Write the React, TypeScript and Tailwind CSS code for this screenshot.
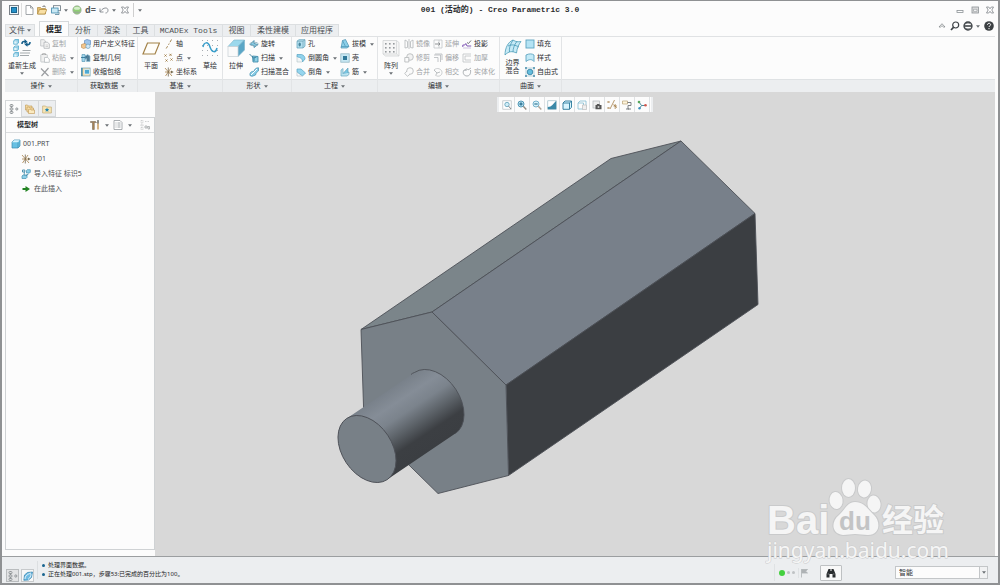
import React from "react";

const art: Record<string, React.ReactNode> = {
  app: (<><rect x="0.5" y="0.5" width="9" height="9" fill="#e8f4fa" stroke="#7a8188" /><rect x="2.5" y="2.5" width="5" height="5" fill="#2490c8" stroke="#17658f" /></>),
  doc: (<path d="M2 .5h4.500L9 3v6.500H2zM6.500 .5V3H9" fill="#fff" stroke="#8b9096" strokeWidth=".8" />),
  folder: (<><path d="M.5 9V2.500h3l1 1h4V9z" fill="#e3bd72" stroke="#b08a3c" strokeWidth=".7" /><path d="M.5 9l2-4.500h7.300L8 9z" fill="#f8dfa4" stroke="#b08a3c" strokeWidth=".7" /><path d="M5.500 2c.8-1.500 2.500-1.500 3 .3" fill="none" stroke="#444" strokeWidth=".8" /></>),
  windows: (<><rect x="2.500" y=".7" width="7" height="5" fill="#fff" stroke="#68747d" strokeWidth=".8" /><rect x=".6" y="3" width="6.500" height="5" fill="#c9e9f5" stroke="#3f88ab" strokeWidth=".8" /><path d="M4 9.500h4V7" fill="none" stroke="#527f96" strokeWidth=".8" /></>),
  ball: (<><circle cx="5" cy="5" r="4.200" fill="#8fce75" stroke="#a4aaa2" strokeWidth=".7" /><ellipse cx="5" cy="3.200" rx="3" ry="1.500" fill="#d6efcb" /><path d="M1.500 7.200h7" stroke="#9aa29a" /></>),
  undo: (<path d="M1 3.500V7h3.500M1 7C4 2 9 2 9 5.200 9 7 8 8 6.500 8" fill="none" stroke="#8e9398" strokeWidth="1" />),
  closeWin: (<path d="M1.500 2h2.200L5 3.800 6.300 2h2.200L6.800 5l1.700 3H6.300L5 6.300 3.700 8H1.500l1.700-3z" fill="#fff" stroke="#7d8388" strokeWidth=".8" />),
  regen: (<>{[0, 6.5, 13].map((y) => <g key={y} transform={`translate(0 ${y})`}><path d="M.7 1.800L2 .5h3.500V4L4.200 5.200H.7z" fill="#e2f5fc" stroke="#4da7cc" strokeWidth=".8" /><path d="M.7 1.800h3.500v3.400M4.200 1.800L5.500 .5" fill="none" stroke="#4da7cc" strokeWidth=".6" /></g>)}
    <path d="M9 5C9 3 10 2.200 12 2.700M17 3c0 2-1 3-3 2.500" fill="none" stroke="#165f8b" strokeWidth="1.600" /><path d="M11.500 0l3 2.700-3 2.300zM14.500 3.200l-3 2.200 3 2.400z" fill="#165f8b" /><path d="M9.500 11.500h8M7 14h10M7 16.500h9" stroke="#a4a9ac" strokeWidth="1.200" /></>),
  copy: (<><path d="M.7 .7H4L5.500 2v5H.7z" fill="#f0f0f0" stroke="#bcbfc2" strokeWidth=".8" /><path d="M4 3.200h3.500L9.300 5v4.300H4z" fill="#f6f6f6" stroke="#b0b4b8" strokeWidth=".8" /><path d="M5.500 6h2.500M5.500 7.500h2.500" stroke="#b8b8b8" strokeWidth=".6" /></>),
  paste: (<><rect x=".8" y="1.500" width="6.500" height="7.500" rx=".6" fill="#f0f0f0" stroke="#bbc0c3" strokeWidth=".8" /><path d="M2.500 2V.8h3V2" fill="none" stroke="#aaa" /><path d="M4.500 4.500h3L9.300 6v3.300H4.500z" fill="#fff" stroke="#b8bdc0" strokeWidth=".8" /></>),
  del: (<path d="M1 1.500l7.500 7.500M8.500 1L1.500 9" stroke="#9b9ea1" strokeWidth="1.200" />),
  udf: (<><path d="M3.500 1.500L6 .5l3.500 1v4L6.500 7l-3-1z" fill="#9fc5ea" stroke="#4f7eb8" strokeWidth=".6" /><path d="M.5 5.500l3-1 2 1v3l-3 1-2-1z" fill="#f3c58c" stroke="#a97739" strokeWidth=".5" /><circle cx="7" cy="7.300" r="2.200" fill="#d2e7f5" stroke="#5290b3" strokeWidth=".6" /></>),
  copyGeom: (<><path d="M1 1.500h3v7H1z" fill="#a2d6ec" stroke="#5d9cb8" strokeWidth=".7" /><path d="M4.500 3l2-1.500L9 3v5.500H5.500V5" fill="#4f7c96" stroke="#8bbdd4" strokeWidth=".7" /><path d="M0 4.500h5M4 2.800l2 1.700-2 1.700" stroke="#276a8d" fill="none" strokeWidth=".8" /></>),
  shrink: (<><rect x=".6" y="1" width="8.500" height="8" fill="#f6dcae" stroke="#6aa2b9" strokeWidth=".7" /><path d="M3.500 2.500h5v4.500H3.500z" fill="#4fa9d2" stroke="#e5f6fd" strokeWidth=".7" /><path d="M1 1v8" stroke="#267ca5" strokeWidth="1.200" /></>),
  plane: (<path d="M5.500 4h12L13 15H1z" fill="#fffefa" stroke="#a28147" strokeWidth="1.200" />),
  axis: (<path d="M7.500 .5L6 3.200M5.200 4.500L4.500 5.800M3.600 7.200L2.200 9.500" stroke="#9b7b43" strokeWidth=".9" />),
  point: (<path d="M.5 1.500l2 2m0-2l-2 2M5.500 .8l2 2m0-2l-2 2M1.500 6.500l2 2m0-2l-2 2M6.500 5.500l2 2m0-2l-2 2" stroke="#9d7941" strokeWidth=".9" />),
  csys: (<><path d="M1 1l7 8M7 1L1.500 9M1 5h7" stroke="#a78249" strokeWidth=".8" /><path d="M4.300 .5v9" stroke="#706651" strokeWidth=".8" /><path d="M7 3.500L9.700 5 7 6.500z" fill="#776c51" /></>),
  sketch: (<><g fill="#a8adb2">{[1, 6, 11, 16].map((x) => [1, 6, 11, 16].map((y) => <rect key={`${x}-${y}`} x={x} y={y} width="1" height="1" />))}</g><path d="M2 8C3 3 7 2 9 8s6 6 7 1" fill="none" stroke="#399ecb" strokeWidth="1.500" /></>),
  extrude: (<><path d="M1 7.500L7 1h10.500L11 7.500z" fill="#9cd9ed" stroke="#7ab3c9" strokeWidth=".6" /><path d="M11 7.500L17.500 1v10L11 17.500z" fill="#5aa6c6" stroke="#7ab3c9" strokeWidth=".6" /><rect x="1" y="7.500" width="10" height="10" fill="#fafafa" stroke="#c7cfd3" strokeWidth=".7" /></>),
  revolve: (<><path d="M5 1.500v3l4 1-4 3v-2L1 5.500z" fill="#8fd0e7" stroke="#3983a3" strokeWidth=".8" /><ellipse cx="5" cy="5" rx="4.300" ry="1.800" fill="none" stroke="#8bb0bf" strokeWidth=".8" /></>),
  sweep: (<><path d="M3.500 3L9 3.500V9H4z" fill="#8ed0e5" stroke="#3684a5" strokeWidth=".8" /><path d="M.5 1l4 4 3-1M5 5v3" fill="none" stroke="#246f90" strokeWidth=".8" /></>),
  blend: (<><path d="M1 8.500C.5 5 3 4 5 4.500 5.500 2 7 .8 9.500 .8v3C8 5 7 6 6.500 8L3 9.300z" fill="#87cce6" stroke="#4a94b3" strokeWidth=".8" /><path d="M2 8l6-6" stroke="#fff" /></>),
  hole: (<><path d="M1 2.200l2-1.500h6v6.500L7 9H1z" fill="#b4e0ef" stroke="#5b9fb9" strokeWidth=".7" /><ellipse cx="3.700" cy="5.500" rx="1.200" ry="2" fill="#4a879f" /><path d="M7 2.200V9M1 2.200h6l2-1.500" fill="none" stroke="#6597ac" strokeWidth=".6" /></>),
  round: (<><path d="M1 1.500h4.500C8 2 9 4 9 6L6.500 9C6.500 6 5 4.500 1 4z" fill="#91d2ec" stroke="#57a3c1" strokeWidth=".7" /><path d="M1 4v5h5" fill="#f0f4f6" stroke="#b4c2c8" strokeWidth=".6" /></>),
  chamfer: (<><path d="M1 2h4l4.500 4-3 3L1 5z" fill="#95d5ee" stroke="#57a3c1" strokeWidth=".7" /><path d="M1 5v4h5.500" fill="none" stroke="#b4c2c8" strokeWidth=".7" /></>),
  draft: (<><path d="M2.500 1.500l3-1 3.500 7-2 1.500H1z" fill="#8cd0e9" stroke="#498faf" strokeWidth=".7" /><path d="M2.500 1.500L5.500 7.500H1M5.500 7.500H9" fill="none" stroke="#4c95b6" strokeWidth=".7" /></>),
  shell: (<><rect x=".8" y=".8" width="8.400" height="8.400" fill="#c6e7f2" stroke="#95b9c5" strokeWidth=".8" /><rect x="3" y="3" width="4" height="4" fill="#2f7898" /></>),
  rib: (<><path d="M1 3l2-1.500v5L9 5v2.500L7 9H1z" fill="#bce3f0" stroke="#68a7be" strokeWidth=".7" /><path d="M3 6.500L8 1v5" fill="#7bc6e2" stroke="#569bb7" strokeWidth=".6" /></>),
  pattern: (<><path d="M1 1.500h13.500L17 3.500V17H3.500L1 15z" fill="#f6f6f6" stroke="#cbced0" strokeWidth=".7" /><path d="M14.500 1.500V15H1M14.500 15l2.500 2" fill="none" stroke="#d0d3d4" strokeWidth=".7" /><g fill="#969a9d">{[3, 7, 11].map((x) => [4, 8, 12].map((y) => <rect key={`${x}-${y}`} x={x} y={y} width="1.600" height="1.600" />))}</g></>),
  mirror: (<path d="M1 1l2.500 1.500v6L1 9zM9 1L6.500 2.500v6L9 9zM5 0v10" fill="none" stroke="#b4b8ba" strokeWidth=".8" />),
  trim: (<><circle cx="6" cy="4" r="3.300" fill="#f2f2f2" stroke="#b2b6b8" strokeWidth=".8" /><path d="M.8 4.500h4V9H.8z" fill="#fbfbfb" stroke="#b2b6b8" strokeWidth=".8" /></>),
  merge: (<><circle cx="6" cy="4" r="3.300" fill="#fafafa" stroke="#b2b6b8" strokeWidth=".8" /><path d="M3 4L.7 6.500 3.500 9.300 6 7.200" fill="#fbfbfb" stroke="#b2b6b8" strokeWidth=".8" /></>),
  extend: (<><path d="M1 1h5v8H1zM6 1h3v8H6" fill="none" stroke="#c3c6c9" strokeWidth=".8" /><path d="M2 5h5M5.500 3.500L7 5 5.500 6.500" fill="none" stroke="#84888a" strokeWidth=".9" /></>),
  offset: (<path d="M1 2h6.500v7M1 4.500h4V9M2 1h7v6" fill="none" stroke="#b4b8bb" strokeWidth=".8" />),
  intersect: (<><path d="M1 3C4 0 9 2 9 5.500S5 10 3 8.500" fill="none" stroke="#bec1c3" strokeWidth=".8" /><path d="M1 3l3 3-1.500 2.500M4 6l3-1" fill="none" stroke="#abb0b2" strokeWidth=".8" /></>),
  project: (<><path d="M5 3.500l1.500 1L9 1.500" fill="none" stroke="#55585c" strokeWidth=".8" /><path d="M.8 8V6h2l1-1.500 1.200 2.500h4.200" fill="none" stroke="#8057b5" strokeWidth="1" /><path d="M1 9h8" stroke="#c3b5d8" strokeWidth=".8" /></>),
  thicken: (<path d="M9 1H1v8h8M9 3H3v4h6" fill="none" stroke="#bec1c4" strokeWidth=".8" />),
  solidify: (<path d="M2 3C0 6 2 9 5 9s4-3 3.500-6M3 4c0-2 2-3 3-1l3-2M2 3h3" fill="none" stroke="#a7acaf" strokeWidth=".9" />),
  boundary: (<><path d="M1 16C1 9 4 3 9 1c3 2 5 2 8 1.500C15 5 13 9 12.500 14 8 12 5 12 1 16z" fill="#c6eaf6" stroke="#4c9db8" strokeWidth=".8" /><path d="M4 7c4-2 7-1 11 1M9 1C6 6 5 9 5.500 13M13 2.300C10 6 9 10 9 13" fill="none" stroke="#4998b6" strokeWidth=".8" /></>),
  fill: (<rect x="1" y="1" width="8" height="8" fill="#b4e3f4" stroke="#5da4c0" strokeWidth=".9" />),
  style: (<path d="M1 8.500V2C4 .5 7 .5 9 2v6.500C7 6 4 6 1 8.500z" fill="#c3eaf7" stroke="#5da4c0" strokeWidth=".9" />),
  freestyle: (<><rect x="1" y="1" width="8" height="8" fill="none" stroke="#9fc2cf" strokeWidth=".7" /><circle cx="5" cy="5" r="2.800" fill="#64bddd" stroke="#317d9f" strokeWidth=".8" /><path d="M0 0h2v2H0zM8 0h2v2H8zM0 8h2v2H0zM8 8h2v2H8z" fill="#6da4bc" /></>),
  tree: (<><path d="M2.500 0v10" stroke="#777c80" strokeWidth=".6" /><g fill="#e7e8e8" stroke="#73797d" strokeWidth=".7"><rect x="1" y=".6" width="3" height="2" rx=".8" /><rect x="1" y="4" width="3" height="2" rx=".8" /><rect x="1" y="7.400" width="3" height="2" rx=".8" /><circle cx="7.800" cy="5" r="1.100" /></g></>),
  folders: (<><path d="M.5 1h2l1 1H7v4H.5z" fill="#f4dca3" stroke="#bd9550" strokeWidth=".6" /><path d="M2 3h2l1 1h3.500v4H2z" fill="#f8dfaa" stroke="#bd9550" strokeWidth=".6" /><path d="M3.500 5.500l2-.5.5 1h3.500v3.500h-6z" fill="#fbeac0" stroke="#bd9550" strokeWidth=".6" /></>),
  favorite: (<><path d="M.6 9V2h3l1 1h4.800v6z" fill="#f8e5b2" stroke="#c3ac7b" strokeWidth=".7" /><path d="M5 3.800l.7 1.300 1.500.2-1.100 1 .3 1.500L5 7l-1.400.8.3-1.500-1.100-1 1.500-.2z" fill="#2385b3" /></>),
  tools: (<><path d="M.5 1.500h5l1 1H4.300v7H2.500v-7h-2z" fill="#ac8556" stroke="#675a4b" strokeWidth=".5" /><path d="M8 .5v9" stroke="#c99c60" strokeWidth="1.500" /><path d="M8 0v3.500" stroke="#798084" strokeWidth="1.500" /></>),
  list: (<><path d="M1 .5h6L9 2.500v7H1z" fill="#fff" stroke="#959ba0" strokeWidth=".8" /><path d="M2.500 3h1m1 0h3m-5 2h1m1 0h3m-5 2h1m1 0h3" stroke="#868d92" strokeWidth=".8" /></>),
  treeOff: (<g fill="none" stroke="#c4c6c8" strokeWidth=".8"><path d="M1 .5h2v2H1zM1 4h2v2H1zM1 7.500h2v2H1zM5 1.500h4" strokeDasharray="1 .5" /><path d="M5 6h2v2H5zM8 6.500h1.500v2.500H8zM7 7h1" stroke="#a5a8aa" /></g>),
  part: (<><path d="M1 3.200L3 1h6v6L7 9H1z" fill="#66c0e3" stroke="#398baf" strokeWidth=".7" /><path d="M1.300 3.300L3 1.300h5.700L7 3.300z" fill="#d8f3fc" /><path d="M7 3.300V9" stroke="#398baf" strokeWidth=".6" /></>),
  imported: (<><path d="M1 7l1-1h4v2.500l-1 1H1zM5.500 1.500L6.300.7h3v2.500l-.8.8h-3z" fill="#8ed0e8" stroke="#4591b0" strokeWidth=".7" /><path d="M1.500 1h2.300v2H1.500zM3 3c1.500 1-1 2 1 3.500M5 6.500L7.500 5" fill="none" stroke="#3b86a6" strokeWidth=".9" /></>),
  insert: (<path d="M1.500 3.900h3V2L9 5 4.500 8V6.100h-3z" fill="#238322" />),
  zoomFit: (<><rect x=".8" y=".8" width="8.400" height="8.400" fill="#fff" stroke="#b5bcc0" strokeWidth=".7" /><circle cx="5" cy="4.500" r="2.200" fill="#d1edf7" stroke="#5d9fb9" strokeWidth=".8" /><path d="M6.500 6l2.500 3" stroke="#888" /></>),
  zoomIn: (<><circle cx="4" cy="4" r="3" fill="#bce4f3" stroke="#448eaf" strokeWidth=".9" /><path d="M6.300 6.300L9.300 9.500" stroke="#928b80" strokeWidth="1.400" /><path d="M2.300 4h3.400M4 2.300v3.400" stroke="#145f80" /></>),
  zoomOut: (<><circle cx="4" cy="4" r="3" fill="#d9f2fa" stroke="#6bacc6" strokeWidth=".9" /><path d="M6.300 6.300L9.300 9.500" stroke="#b0a496" strokeWidth="1.400" /><path d="M2.300 4h3.400" stroke="#145f80" /></>),
  repaint: (<><rect x=".8" y=".8" width="8.400" height="8.400" fill="#fff" stroke="#8cb1be" strokeWidth=".6" /><path d="M9.200 .8v8.400H.8V7C5 7 6 4 9.200 .8z" fill="#3b89a8" /></>),
  shading: (<><path d="M1 3l2-2h6.500v6.300L7.500 9.300H1z" fill="#d9f4fd" stroke="#287798" strokeWidth=".9" /><path d="M1 3h6.500v6.300M7.500 3l2-2" fill="none" stroke="#287798" strokeWidth=".9" /></>),
  saved: (<><path d="M1 3l2-2h6v6M1 3v6h5" fill="none" stroke="#83bdd2" strokeWidth=".8" /><path d="M1 3h5.500v3" fill="none" stroke="#83bdd2" strokeWidth=".8" /><path d="M5.500 5h4v4.500h-4z" fill="#eee" stroke="#bbb" strokeWidth=".7" /></>),
  camera: (<><rect x="1" y="1" width="6.500" height="7" fill="#eee" stroke="#b0b4b8" strokeWidth=".7" /><path d="M3.500 5h1l.7-1h2l.7 1h1.600v4.200h-6z" fill="#555" /><circle cx="6.500" cy="7" r="1" fill="#ccc" /></>),
  datum: (<path d="M.5 1l2 2m0-2l-2 2M7.500 0L3 9M6.500 6h3.500M8.200 4v5M6.500 4.500l3.300 3.300M.5 7l2 2m0-2l-2 2" fill="none" stroke="#a7824b" strokeWidth=".8" />),
  annotation: (<><path d="M.5 1h5v3h-5z" fill="#fff6dd" stroke="#b7a175" strokeWidth=".7" /><path d="M5.500 2.500H9v3H6v3.500h3M4 9h3" fill="none" stroke="#707478" strokeWidth=".9" /></>),
  spin: (<><path d="M4.500 5.500L2 2M4.500 5.500H8M4.500 5.500L2.500 8.500" stroke="#4c8b9b" strokeWidth="1" /><circle cx="2" cy="2" r="1.300" fill="#58a85b" /><circle cx="8.500" cy="5.300" r="1.300" fill="#cf584e" /><circle cx="2.500" cy="8.300" r="1.200" fill="#3c90bd" /></>),
  browser: (<><path d="M1.500 4l3-2.500L9.500 1 8.500 6.500 5.500 9 .8 9.300z" fill="#6fbbe2" stroke="#2f81ad" strokeWidth=".7" /><path d="M2 8c0-3 2-4.500 6-6M5 8.500C7 7 8 5 8 3" fill="none" stroke="#fff" strokeWidth=".8" /></>),
  flag: (<path d="M2.500 1v8.500M3 1.500h5.500L6.500 3.200 8.500 5H3z" fill="#aeb2b5" stroke="#aeb2b5" strokeWidth=".8" />),
  binoculars: (<><path d="M2.500 1h2v2h1V1h2l2 5v3.500h-3V6h-3v3.500h-3V6z" fill="#292c2e" /><path d="M1.500 6h1.500M7 6h1.500" stroke="#999" strokeWidth=".7" /></>),
  minimize: (<rect x="2" y="5.500" width="6" height="2" fill="#fff" stroke="#8c9296" strokeWidth=".8" />),
  maximize: (<><rect x="2" y="2" width="6.500" height="6" fill="#ddd" stroke="#8c9296" strokeWidth=".8" /><path d="M3.500 4.300h3.500v2H3.500z" fill="#fff" stroke="#8c9296" strokeWidth=".6" /></>),
  collapse: (<path d="M5 2.700L8 6H6.500L5 4.700 3.500 6H2z" fill="none" stroke="#777c80" strokeWidth=".7" />),
  search: (<><circle cx="5.700" cy="4" r="3" fill="none" stroke="#3d4246" strokeWidth="1.200" /><path d="M3.700 6.200L1 9" stroke="#3d4246" strokeWidth="1.700" /></>),
  world: (<><circle cx="5" cy="5" r="4" fill="#fff" stroke="#3f4448" strokeWidth="1.300" /><path d="M1 5h8" stroke="#3f4448" strokeWidth="1.600" /><path d="M2.500 2.800C4 1.600 6 1.600 7.500 2.800M2.500 7.200C4 8.400 6 8.400 7.500 7.200" fill="none" stroke="#3f4448" strokeWidth=".9" /></>),
  help: (<><circle cx="5" cy="5" r="4.800" fill="#3c4043" /><path d="M3.500 3.800C3.500 1.800 6.600 1.800 6.600 3.700 6.600 4.800 5 4.800 5 6M5 7v1.200" fill="none" stroke="#fff" strokeWidth="1" /></>),
};

function Icon({ name, large = false }: { name: string; large?: boolean }) {
  return (
    <svg aria-hidden="true" viewBox={large ? "0 0 18 18" : "0 0 10 10"} className={large ? "size-[18px] shrink-0" : "size-[10px] shrink-0"}>
      {art[name]}
    </svg>
  );
}

function Caret() {
  return (
    <svg aria-hidden="true" viewBox="0 0 4 3" className="h-[3px] w-[4px] shrink-0">
      <path d="M0 .3h4L2 2.700z" fill="#6c7176" />
    </svg>
  );
}

type Cmd = [icon: string, label: string, caret?: boolean];

function Column({ items, className = "", disabled = false, enabledFirst = false }: { items: Cmd[]; className?: string; disabled?: boolean; enabledFirst?: boolean }) {
  return (
    <div className={`grid shrink-0 grid-rows-3 ${className}`}>
      {items.map(([icon, label, caret], i) => {
        const off = disabled && !(enabledFirst && i === 0);
        return (
          <button key={label} disabled={off} className={`flex h-[14px] items-center gap-[2px] whitespace-nowrap ${off ? "text-[#a0a3a6]" : "text-[#2c2f32]"}`}>
            <Icon name={icon} />
            <span>{label}</span>
            {caret && <span className="ml-[2px] flex"><Caret /></span>}
          </button>
        );
      })}
    </div>
  );
}

function Big({ icon, lines, caret = false, className }: { icon: string; lines: string[]; caret?: boolean; className: string }) {
  return (
    <button className={`flex shrink-0 flex-col items-center pt-[2px] whitespace-nowrap text-[#2c2f32] ${className}`}>
      <Icon name={icon} large />
      <span className={`flex flex-col leading-[8px] ${lines.length > 1 ? "pt-[2px]" : "pt-[5px]"}`}>
        {lines.map((l) => <span key={l}>{l}</span>)}
      </span>
      {caret && <span className="flex pt-[2px]"><Caret /></span>}
    </button>
  );
}

function Group({ title, className, children }: { title: string; className: string; children: React.ReactNode }) {
  return (
    <section className={`flex shrink-0 flex-col border-r border-[#e2e4e6] ${className}`}>
      <div className="flex h-[42px]">{children}</div>
      <button className="flex h-[13px] items-center justify-center gap-[3px] border-t border-[#dfe2e4] bg-[#eceef0] text-[#2c2f32]">
        {title}<Caret />
      </button>
    </section>
  );
}

const tabs: [string, string][] = [
  ["分析", "w-[29px]"], ["渲染", "w-[29px]"], ["工具", "w-[28px]"], ["MCADEx Tools", "w-[68px]"],
  ["视图", "w-[28px]"], ["柔性建模", "w-[45px]"], ["应用程序", "w-[43px]"],
];

function TitleBar() {
  return (
    <header className="grid h-[18px] shrink-0 grid-cols-[1fr_auto_1fr] items-center bg-[#fcfcfc]">
      <div className="flex items-center pl-[7px]">
        <Icon name="app" />
        <div className="ml-[2px] h-[14px] w-px bg-[#dedede]" />
        <div className="flex items-center gap-[3px] pl-[2px]">
          <button aria-label="新建"><Icon name="doc" /></button>
          <button aria-label="打开"><Icon name="folder" /></button>
          <button aria-label="窗口" className="ml-[1px] flex items-center gap-[3px]"><Icon name="windows" /><Caret /></button>
          <button aria-label="重新生成" className="ml-[1px]"><Icon name="ball" /></button>
          <button className="text-[9px] leading-[10px] font-bold text-[#55595d]">d=</button>
          <button aria-label="撤消" className="flex items-center gap-[3px]"><Icon name="undo" /><Caret /></button>
          <button aria-label="关闭窗口" className="ml-[1px]"><Icon name="closeWin" /></button>
          <div className="h-[14px] w-px bg-[#cfcfcf]" />
          <button aria-label="自定义" className="p-px"><Caret /></button>
        </div>
      </div>
      <h1 className="font-['Liberation_Mono','Noto_Sans_CJK_SC',monospace] text-[8px] leading-[12px] font-bold text-[#2b2d30]">001 (活动的) - Creo Parametric 3.0</h1>
      <div className="flex items-center justify-end gap-[5px] pr-[3px]">
        <button aria-label="最小化"><Icon name="minimize" /></button>
        <button aria-label="最大化"><Icon name="maximize" /></button>
        <button aria-label="关闭"><Icon name="closeWin" /></button>
      </div>
    </header>
  );
}

function Ribbon() {
  return (
    <>
      <nav className="flex h-[17px] shrink-0 items-end bg-[#fcfcfc] font-['Liberation_Mono','Noto_Sans_CJK_SC',monospace] text-[8px] text-[#4b4f53]">
        <button className="flex h-[12px] w-[30px] items-center justify-center gap-[2px] border border-b-0 border-[#dcdfe1] bg-[#eceef0]">文件<Caret /></button>
        <button className="ml-[4px] flex h-[15px] w-[30px] items-end justify-center border border-b-0 border-[#d5d8da] bg-[#fcfcfc] pb-[1px] font-bold text-[#202224]">模型</button>
        {tabs.map(([t, w]) => (
          <button key={t} className={`flex h-[12px] items-center justify-center border-t border-r border-[#dcdfe1] bg-[#eceef0] whitespace-nowrap ${w}`}>{t}</button>
        ))}
        <div className="ml-auto flex h-[17px] items-start gap-[3px] pt-[2px] pr-[1px]">
          <button aria-label="折叠功能区"><Icon name="collapse" /></button>
          <button aria-label="搜索"><Icon name="search" /></button>
          <button aria-label="社区" className="flex items-center gap-[3px]"><Icon name="world" /><Caret /></button>
          <button aria-label="帮助" className="ml-[1px]"><Icon name="help" /></button>
        </div>
      </nav>
      <div className="flex shrink-0 border-t border-[#e0e2e4] bg-[#fcfcfc]">
        <Group title="操作" className="w-[73px]">
          <Big icon="regen" lines={["重新生成"]} caret className="w-[34px]" />
          <Column className="pl-[1px]" disabled items={[["copy", "复制"], ["paste", "粘贴", true], ["del", "删除", true]]} />
        </Group>
        <Group title="获取数据" className="w-[60px]">
          <Column className="pl-[3px]" items={[["udf", "用户定义特征"], ["copyGeom", "复制几何"], ["shrink", "收缩包络"]]} />
        </Group>
        <Group title="基准" className="w-[85px]">
          <Big icon="plane" lines={["平面"]} className="w-[26px]" />
          <Column className="w-[35px]" items={[["axis", "轴"], ["point", "点", true], ["csys", "坐标系"]]} />
          <Big icon="sketch" lines={["草绘"]} className="w-[22px]" />
        </Group>
        <Group title="形状" className="w-[69px]">
          <Big icon="extrude" lines={["拉伸"]} className="w-[26px]" />
          <Column items={[["revolve", "旋转"], ["sweep", "扫描", true], ["blend", "扫描混合"]]} />
        </Group>
        <Group title="工程" className="w-[86px]">
          <Column className="w-[48px] pl-[4px]" items={[["hole", "孔"], ["round", "倒圆角", true], ["chamfer", "倒角", true]]} />
          <Column items={[["draft", "拔模", true], ["shell", "壳"], ["rib", "筋", true]]} />
        </Group>
        <Group title="编辑" className="w-[122px]">
          <Big icon="pattern" lines={["阵列"]} caret className="w-[26px]" />
          <Column className="w-[29px]" disabled items={[["mirror", "镜像"], ["trim", "修剪"], ["merge", "合并"]]} />
          <Column className="w-[29px]" disabled items={[["extend", "延伸"], ["offset", "偏移"], ["intersect", "相交"]]} />
          <Column disabled enabledFirst items={[["project", "投影"], ["thicken", "加厚"], ["solidify", "实体化"]]} />
        </Group>
        <Group title="曲面" className="w-[62px]">
          <Big icon="boundary" lines={["边界", "混合"]} className="w-[25px]" />
          <Column items={[["fill", "填充"], ["style", "样式"], ["freestyle", "自由式"]]} />
        </Group>
        <div className="flex flex-1 flex-col justify-end"><div className="h-[13px] border-t border-[#dfe2e4] bg-[#eceef0]" /></div>
      </div>
    </>
  );
}

function ModelTree() {
  const rows: [string, string][] = [["csys", "001"], ["imported", "导入特征 标识5"], ["insert", "在此插入"]];
  return (
    <aside className="flex w-[150px] shrink-0 flex-col bg-[#fcfcfc] pt-[8px] pb-[6px]">
      <div className="flex h-[17px]">
        <button aria-label="模型树" className="flex w-[17px] items-center justify-center border border-b-0 border-[#d5d8da]"><Icon name="tree" /></button>
        <button aria-label="文件夹浏览器" className="flex w-[17px] items-center justify-center border border-l-0 border-[#d5d8da] bg-[#eceef0]"><Icon name="folders" /></button>
        <button aria-label="收藏夹" className="flex w-[17px] items-center justify-center border border-l-0 border-[#d5d8da] bg-[#eceef0]"><Icon name="favorite" /></button>
      </div>
      <div className="flex flex-1 flex-col border border-[#cfd2d4]">
        <div className="flex h-[15px] items-center border-b border-[#dadcde] pl-[11px]">
          <h2 className="font-bold text-[#2c2f32]">模型树</h2>
          <div className="ml-auto flex items-center gap-[4px]">
            <button aria-label="设置" className="flex items-center gap-[5px]"><Icon name="tools" /><Caret /></button>
            <button aria-label="显示" className="flex items-center gap-[5px]"><Icon name="list" /><Caret /></button>
            <button aria-label="过滤器" disabled className="ml-[4px] pr-[4px]"><Icon name="treeOff" /></button>
          </div>
        </div>
        <ul className="pt-[3px] text-[#4a4d50]">
          <li>
            <div className="flex h-[15px] items-center gap-[2px] pl-[5px]"><Icon name="part" />001.PRT</div>
            <ul>
              {rows.map(([icon, label]) => (
                <li key={label} className="flex h-[15px] items-center gap-[3px] pl-[15px]"><Icon name={icon} />{label}</li>
              ))}
            </ul>
          </li>
        </ul>
      </div>
    </aside>
  );
}

function PartModel() {
  return (
    <svg role="img" aria-label="001" viewBox="155 92 840 464" className="h-full w-full">
      <defs>
        <linearGradient id="shaft" gradientUnits="userSpaceOnUse" x1="380.700" y1="395.400" x2="421.300" y2="456.600">
          <stop offset="0" stopColor="#79818a" />
          <stop offset=".2" stopColor="#858d97" />
          <stop offset=".38" stopColor="#7b838c" />
          <stop offset=".58" stopColor="#5c6268" />
          <stop offset=".78" stopColor="#3c3f43" />
          <stop offset="1" stopColor="#3b3e42" />
        </linearGradient>
      </defs>
      <g stroke="#4d5057" strokeWidth=".9" strokeLinejoin="round">
        <path d="M361 329.500L611 158.500 681 141 432 312z" fill="#7b858a" />
        <path d="M432 312L681 141 755 213.500 506 385z" fill="#78808a" />
        <path d="M506 385L755 213.500 758 304.500 508.500 475.500z" fill="#3b3e42" />
        <path d="M361 329.500L432 312 506 385 508.500 475.500 438 493.500 364 421z" fill="#788087" />
      </g>
      <path d="M346.700 418.400L414.700 372.400A36.700 24.900 56.400 0 1 455.300 433.600L387.300 479.600z" fill="url(#shaft)" />
      <path d="M411 374.500C412 373.500 413 373 414.700 372.400A36.700 24.900 56.400 0 1 455.300 433.600" fill="none" stroke="#4d5057" strokeWidth=".9" />
      <ellipse cx="367" cy="449" rx="36.700" ry="24.900" transform="rotate(56.400 367 449)" fill="#788087" stroke="#4d5057" strokeWidth=".9" />
    </svg>
  );
}

const viewTools: [string, string][] = [
  ["zoomFit", "重新调整"], ["zoomIn", "放大"], ["zoomOut", "缩小"], ["repaint", "重画"], ["shading", "显示样式"],
  ["saved", "已保存方向"], ["camera", "视图管理器"], ["datum", "基准显示"], ["annotation", "注释显示"], ["spin", "旋转中心"],
];

function Viewport() {
  return (
    <main className="relative min-w-0 flex-1 bg-[#d8d8d8]">
      <div className="absolute inset-0"><PartModel /></div>
      <div className="absolute inset-x-0 top-[5px] flex justify-center">
        <div className="flex h-[15px] border-x-2 border-[#eceef0] bg-[#fcfcfc] px-px">
          {viewTools.map(([icon, label]) => (
            <button key={icon} aria-label={label} className="flex w-[15px] items-center justify-center border-r border-[#dfe2e4]"><Icon name={icon} /></button>
          ))}
        </div>
      </div>
    </main>
  );
}

function StatusBar() {
  return (
    <footer className="flex h-[27px] shrink-0 items-center border-t border-[#9b9ea0] bg-[#eceef0]">
      <div className="flex gap-[2px] self-end pb-[1px] pl-[4px]">
        <button aria-label="切换模型树" className="flex size-[13px] items-center justify-center border border-[#b9bcbe] bg-[#e2e3e4]"><Icon name="tree" /></button>
        <button aria-label="切换浏览器" className="flex size-[13px] items-center justify-center border border-[#c7cacc] bg-[#f7f7f7]"><Icon name="browser" /></button>
      </div>
      <ul className="ml-[3px] border-l border-[#dcdfe1] pl-[4px] text-[6px] leading-[9px] text-[#202224]">
        {["处理界面数据。", "正在处理001.stp，步骤53:已完成的百分比为100。"].map((m) => (
          <li key={m} className="flex items-center gap-[3px]"><span className="size-[3px] rounded-full bg-[#19658f]" />{m}</li>
        ))}
      </ul>
      <div className="ml-auto flex items-center pt-[5px] pr-[10px]">
        <div className="flex h-[17px] items-center gap-[2px] border-l border-[#dfe2e4] pl-[4px]">
          <span className="size-[6px] rounded-full bg-[#44d03f]" />
          <span className="size-[3px] rounded-full bg-[#bfc2c4]" />
          <span className="size-[3px] rounded-full bg-[#bfc2c4]" />
        </div>
        <button aria-label="通知" className="ml-[3px] flex w-[22px] border-l border-[#dfe2e4]"><Icon name="flag" /></button>
        <button aria-label="查找" className="flex h-[16px] w-[22px] items-center justify-center rounded-[1px] border border-[#bec1c3] bg-[#f8f8f8]"><Icon name="binoculars" /></button>
        <label className="relative ml-[53px] flex items-center">
          <span className="sr-only">选择过滤器</span>
          <select className="h-[13px] w-[93px] appearance-none border border-[#c3c6c8] bg-[#fcfcfc] pl-[3px] font-['Noto_Sans_CJK_SC',sans-serif] text-[7px] leading-[11px] text-[#2c2f32]">
            <option>智能</option>
          </select>
          <span className="pointer-events-none absolute inset-y-px right-px flex w-[8px] items-center justify-center border-l border-[#c3c6c8] bg-[#f1f2f3]"><Caret /></span>
        </label>
      </div>
    </footer>
  );
}

function Watermark() {
  return (
    <svg role="img" aria-label="Baidu 经验" viewBox="765 475 185 90" className="pointer-events-none absolute right-[48px] bottom-[18px] h-[90px] w-[185px]">
      <g fill="#f5f5f5" stroke="#c9cacb" strokeWidth="2" paintOrder="stroke" strokeLinejoin="round">
        <text x="767" y="534" fontSize="40" fontWeight="700" className="font-['Liberation_Sans',sans-serif]">Bai</text>
        <ellipse cx="836" cy="500.500" rx="6.500" ry="8.500" transform="rotate(-8 836 500)" />
        <ellipse cx="848.500" cy="488" rx="6.500" ry="9" />
        <ellipse cx="864.500" cy="489" rx="6.500" ry="8.500" transform="rotate(10 864.500 489)" />
        <ellipse cx="874" cy="504" rx="6.500" ry="8.500" transform="rotate(-8 874 504)" />
        <path d="M855 502c-8 0-10 8-16 13-8 6-8 19 4 20 5 0 7-1 12-1s8 1 13 1c12 0 13-13 6-20-6-5-9-13-19-13z" />
        <text x="882" y="531" fontSize="31" fontWeight="700" className="font-['Noto_Sans_CJK_SC',sans-serif]">经验</text>
        <text x="767" y="558" fontSize="21" strokeWidth="1" className="font-['Noto_Sans',sans-serif]">jingyan.baidu.com</text>
      </g>
      <text x="839" y="530" fontSize="26" fontWeight="700" fill="#c3c4c5" className="font-['Liberation_Sans',sans-serif]">du</text>
    </svg>
  );
}

export default function App() {
  return (
    <div className="relative flex h-screen flex-col overflow-hidden border-2 border-t-1 border-[#8f9193] bg-[#fcfcfc] font-['Noto_Sans','Noto_Sans_CJK_SC',sans-serif] text-[7px] leading-[10px]">
      <TitleBar />
      <div className="flex min-h-0 flex-1 flex-col px-[3px]">
        <Ribbon />
        <div className="flex min-h-0 flex-1">
          <ModelTree />
          <Viewport />
        </div>
      </div>
      <StatusBar />
      <Watermark />
    </div>
  );
}
